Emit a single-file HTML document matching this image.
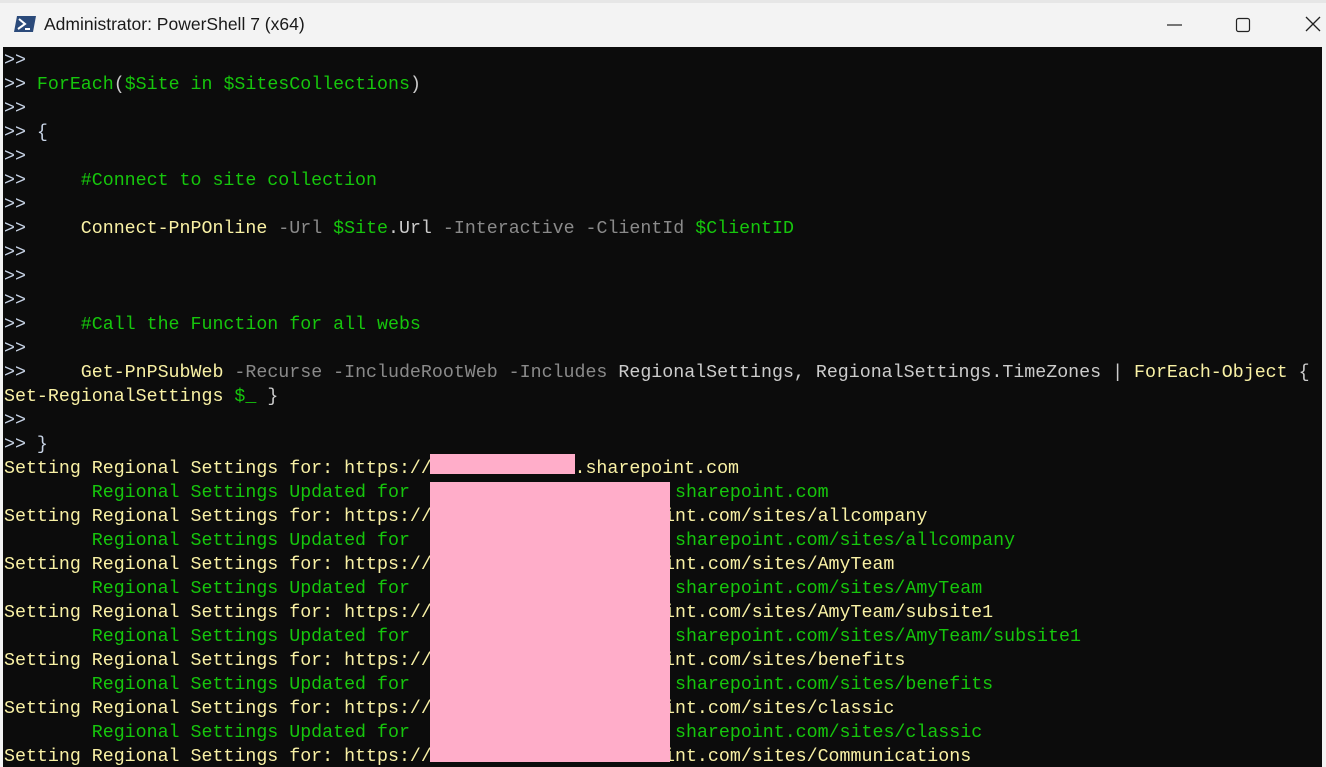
<!DOCTYPE html>
<html><head><meta charset="utf-8"><style>
html,body{margin:0;padding:0;width:1326px;height:767px;overflow:hidden;background:#f3f3f3;font-family:"Liberation Sans",sans-serif}
.top{position:absolute;left:0;top:0;width:1326px;height:3px;background:#e6e6e6}
.title{position:absolute;left:44px;top:14px;font-size:17.5px;color:#1a1a1a}
.term{position:absolute;left:3px;top:47px;width:1319px;height:720px;background:#0c0c0c;overflow:hidden}
.l{position:absolute;left:1px;height:24px;line-height:24px;margin-top:2px;font-family:"Liberation Mono",monospace;font-size:18.3px;white-space:pre;color:#cccccc}
.p{color:#c8d4e6}.g{color:#16c60c}.y{color:#f9f1a5}.d{color:#8a8a8a}.w{color:#cccccc}
.pink{position:absolute;background:#ffadc9}
</style></head><body>
<div class="top"></div>
<svg style="position:absolute;left:14px;top:16px" width="22" height="16" viewBox="0 0 22 16"><polygon points="3,0 22,0 19,16 0,16" fill="#2b4a7a"/><path d="M5 3 L11 8 L4 13" stroke="#fff" stroke-width="2" fill="none"/><path d="M11 13 H16" stroke="#fff" stroke-width="2"/></svg>
<div class="title">Administrator: PowerShell 7 (x64)</div>
<svg style="position:absolute;left:1165px;top:16px" width="160" height="20"><path d="M2 9 H17" stroke="#222" stroke-width="1.2"/><rect x="71.5" y="2.5" width="13" height="13" rx="2" fill="none" stroke="#222" stroke-width="1.2"/><path d="M141 1 L155 15 M155 1 L141 15" stroke="#222" stroke-width="1.3"/></svg>
<div class="term">
<div class="l p" style="top:0">&gt;&gt;</div>
<div class="l" style="top:24px"><span class="p">&gt;&gt; </span><span class="g">ForEach</span><span class="w">(</span><span class="g">$Site in $SitesCollections</span><span class="w">)</span></div>
<div class="l p" style="top:48px">&gt;&gt;</div>
<div class="l p" style="top:72px">&gt;&gt; {</div>
<div class="l p" style="top:96px">&gt;&gt;</div>
<div class="l" style="top:120px"><span class="p">&gt;&gt;     </span><span class="g">#Connect to site collection</span></div>
<div class="l p" style="top:144px">&gt;&gt;</div>
<div class="l" style="top:168px"><span class="p">&gt;&gt;     </span><span class="y">Connect-PnPOnline</span> <span class="d">-Url</span> <span class="g">$Site</span><span class="w">.Url</span> <span class="d">-Interactive -ClientId</span> <span class="g">$ClientID</span></div>
<div class="l p" style="top:192px">&gt;&gt;</div>
<div class="l p" style="top:216px">&gt;&gt;</div>
<div class="l p" style="top:240px">&gt;&gt;</div>
<div class="l" style="top:264px"><span class="p">&gt;&gt;     </span><span class="g">#Call the Function for all webs</span></div>
<div class="l p" style="top:288px">&gt;&gt;</div>
<div class="l" style="top:312px"><span class="p">&gt;&gt;     </span><span class="y">Get-PnPSubWeb</span> <span class="d">-Recurse -IncludeRootWeb -Includes</span> <span class="w">RegionalSettings, RegionalSettings.TimeZones | </span><span class="y">ForEach-Object</span><span class="w"> {</span></div>
<div class="l" style="top:336px"><span class="y">Set-RegionalSettings</span> <span class="g">$_</span><span class="w"> }</span></div>
<div class="l p" style="top:360px">&gt;&gt;</div>
<div class="l p" style="top:384px">&gt;&gt; }</div>
<div class="l y" style="top:408px">Setting Regional Settings for: https://             .sharepoint.com</div>
<div class="l g" style="top:432px">        Regional Settings Updated for</div>
<div class="l g" style="top:432px;left:672px">sharepoint.com</div>
<div class="l y" style="top:456px">Setting Regional Settings for: https://</div>
<div class="l y" style="top:456px;left:661px">int.com/sites/allcompany</div>
<div class="l g" style="top:480px">        Regional Settings Updated for</div>
<div class="l g" style="top:480px;left:672px">sharepoint.com/sites/allcompany</div>
<div class="l y" style="top:504px">Setting Regional Settings for: https://</div>
<div class="l y" style="top:504px;left:661px">int.com/sites/AmyTeam</div>
<div class="l g" style="top:528px">        Regional Settings Updated for</div>
<div class="l g" style="top:528px;left:672px">sharepoint.com/sites/AmyTeam</div>
<div class="l y" style="top:552px">Setting Regional Settings for: https://</div>
<div class="l y" style="top:552px;left:661px">int.com/sites/AmyTeam/subsite1</div>
<div class="l g" style="top:576px">        Regional Settings Updated for</div>
<div class="l g" style="top:576px;left:672px">sharepoint.com/sites/AmyTeam/subsite1</div>
<div class="l y" style="top:600px">Setting Regional Settings for: https://</div>
<div class="l y" style="top:600px;left:661px">int.com/sites/benefits</div>
<div class="l g" style="top:624px">        Regional Settings Updated for</div>
<div class="l g" style="top:624px;left:672px">sharepoint.com/sites/benefits</div>
<div class="l y" style="top:648px">Setting Regional Settings for: https://</div>
<div class="l y" style="top:648px;left:661px">int.com/sites/classic</div>
<div class="l g" style="top:672px">        Regional Settings Updated for</div>
<div class="l g" style="top:672px;left:672px">sharepoint.com/sites/classic</div>
<div class="l y" style="top:696px">Setting Regional Settings for: https://</div>
<div class="l y" style="top:696px;left:661px">int.com/sites/Communications</div>
<div class="pink" style="left:427px;top:407px;width:145px;height:20px"></div>
<div class="pink" style="left:427px;top:435px;width:240px;height:280px"></div>
</div>
</body></html>
